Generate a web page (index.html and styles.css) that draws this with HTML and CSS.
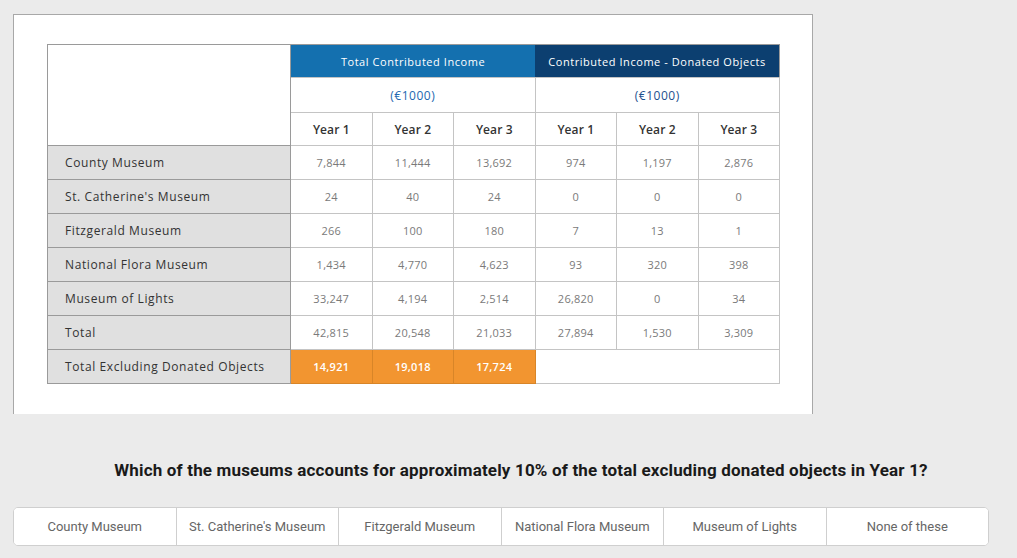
FILE: index.html
```html
<!DOCTYPE html>
<html>
<head>
<meta charset="utf-8">
<link rel="stylesheet" href="styles.css">
</head>
<body>
<div class="panel">
  <table class="data">
    <colgroup>
      <col class="c-label">
      <col class="c-num"><col class="c-num"><col class="c-num">
      <col class="c-num"><col class="c-num"><col class="c-num">
    </colgroup>
    <tr class="r-head">
      <td class="blank" rowspan="3"></td>
      <th colspan="3" class="h-blue">Total Contributed Income</th>
      <th colspan="3" class="h-navy">Contributed Income - Donated Objects</th>
    </tr>
    <tr class="r-unit">
      <td colspan="3" class="unit">(€1000)</td>
      <td colspan="3" class="unit unit-dark">(€1000)</td>
    </tr>
    <tr class="r-year">
      <td class="year">Year 1</td><td class="year">Year 2</td><td class="year">Year 3</td>
      <td class="year">Year 1</td><td class="year">Year 2</td><td class="year">Year 3</td>
    </tr>
    <tr><td class="label">County Museum</td><td>7,844</td><td>11,444</td><td>13,692</td><td>974</td><td>1,197</td><td>2,876</td></tr>
    <tr><td class="label">St. Catherine's Museum</td><td>24</td><td>40</td><td>24</td><td>0</td><td>0</td><td>0</td></tr>
    <tr><td class="label">Fitzgerald Museum</td><td>266</td><td>100</td><td>180</td><td>7</td><td>13</td><td>1</td></tr>
    <tr><td class="label">National Flora Museum</td><td>1,434</td><td>4,770</td><td>4,623</td><td>93</td><td>320</td><td>398</td></tr>
    <tr><td class="label">Museum of Lights</td><td>33,247</td><td>4,194</td><td>2,514</td><td>26,820</td><td>0</td><td>34</td></tr>
    <tr><td class="label">Total</td><td>42,815</td><td>20,548</td><td>21,033</td><td>27,894</td><td>1,530</td><td>3,309</td></tr>
    <tr class="r-last"><td class="label">Total Excluding Donated Objects</td><td class="hl">14,921</td><td class="hl">19,018</td><td class="hl">17,724</td><td colspan="3" class="empty"></td></tr>
  </table>
</div>
<p class="question">Which of the museums accounts for approximately 10% of the total excluding donated objects in Year 1?</p>
<div class="choices">
  <button class="choice">County Museum</button>
  <button class="choice">St. Catherine's Museum</button>
  <button class="choice">Fitzgerald Museum</button>
  <button class="choice">National Flora Museum</button>
  <button class="choice">Museum of Lights</button>
  <button class="choice">None of these</button>
</div>
</body>
</html>
```
FILE: styles.css
```css
html, body {
  margin: 0;
  padding: 0;
}
body {
  background: #ebebeb;
  width: 1017px;
  height: 558px;
  overflow: hidden;
  font-family: "Open Sans", "DejaVu Sans", sans-serif;
}
.panel {
  box-sizing: border-box;
  margin: 14px 0 0 13px;
  width: 800px;
  height: 400px;
  background: #fff;
  border: 1px solid #a8a8a8;
  border-bottom: none;
  padding: 29px 0 0 33px;
}
.data {
  border-collapse: collapse;
  table-layout: fixed;
  width: 732px;
  border: 1px solid #9a9a9a;
  font-family: "Open Sans", "DejaVu Sans", sans-serif;
}
.c-label { width: 243px; }
.c-num { width: 81.5px; }
.data td, .data th {
  border: 1px solid #c4c4c4;
  padding: 0;
  text-align: center;
  height: 33px;
  font-size: 11px;
  letter-spacing: 0.25px;
  color: #7a7a7a;
  font-weight: normal;
}
.data .blank { border: 1px solid #9a9a9a; background: #fff; }
.data th {
  color: #fff;
  font-size: 11px;
  letter-spacing: 0.55px;
  border: none;
}
.h-blue { background: #1470af; }
.h-navy { background: #0c3f70; }
.data .r-head th { height: 32px; }
.data .r-unit td { height: 34px; }
.data .unit { color: #2467b0; font-size: 12px; letter-spacing: 0.5px; }
.data .unit-dark { color: #1d4f8e; }
.data .r-year td { height: 32px; }
.data .r-last td { height: 33px; }
.data .year {
  color: #333;
  font-weight: 600;
  font-size: 12px;
  letter-spacing: 0.1px;
}
.data .label {
  background: #e0e0e0;
  text-align: left;
  padding-left: 17px;
  color: #333;
  font-size: 12px;
  letter-spacing: 0.6px;
  border-color: #9a9a9a;
}
.data .hl {
  background: #f29530;
  color: #fff;
  font-weight: 600;
  border-color: #d88528;
}
.data .empty { border-left: none; }
.question {
  margin: 45px 0 0 0;
  text-align: center;
  font-family: Roboto, "Liberation Sans", sans-serif;
  font-weight: bold;
  font-size: 17px;
  letter-spacing: 0.17px;
  color: #1a1a1a;
  line-height: 22px;
  padding-left: 25px;
}
.choices {
  display: flex;
  margin: 26px 0 0 13px;
  width: 976px;
  height: 39px;
  box-sizing: border-box;
  border: 1px solid #cfcfcf;
  border-radius: 5px;
  background: #fff;
  overflow: hidden;
}
.choice {
  flex: 1 1 0;
  border: none;
  border-left: 1px solid #cfcfcf;
  background: #fff;
  font-family: Roboto, "Liberation Sans", sans-serif;
  font-size: 13px;
  color: #666;
  padding: 0;
  margin: 0;
}
.choice:first-child { border-left: none; }
```
